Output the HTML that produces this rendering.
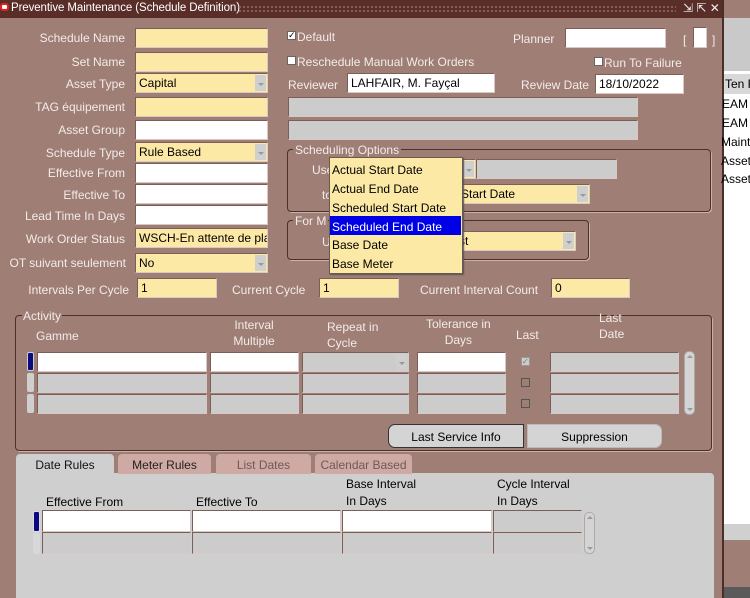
<!DOCTYPE html>
<html><head><meta charset="utf-8"><style>
*{box-sizing:border-box}
body{margin:0;width:750px;height:598px;overflow:hidden;background:#9e7e75;font-family:"Liberation Sans",sans-serif;font-size:12px;position:relative}
div,span{position:absolute}
.l{color:#f3ecea;white-space:nowrap}
.r{text-align:right}
.f{height:20px;border-top:1px solid #7a5e57;border-left:1px solid #7a5e57;border-right:1px solid #d9c9c5;border-bottom:1px solid #d9c9c5;padding:2px 3px;color:#000;white-space:nowrap;overflow:hidden}
.y{background:#fde9a6}.w{background:#fff}.g{background:#cccccc}
.dd{position:absolute;right:1px;top:1px;bottom:1px;width:11px;background:#cfcfcf}
.dd:after{content:"";position:absolute;left:3px;top:8px;border:3px solid transparent;border-top:3px solid #999}
.frame{border:1px solid #4e302b;border-radius:4px;box-shadow:1px 1px 0 #c9b1ab}
.t{color:#000;white-space:nowrap}
.cb{width:9px;height:9px;background:#fff;border:1px solid #666}
.ri{width:7px;height:19px;background:#cfcfcf;border-radius:2px}
.tab{top:454px;height:20px;background:#cfa9a4;border-radius:4px 4px 0 0;text-align:center;padding-top:4px;color:#222}
.sb{background:#d4d4d4;border:1px solid #aaa;border-radius:5px}
.sb:before{content:"";position:absolute;left:2px;top:3px;border:3px solid transparent;border-bottom:3px solid #999;border-top:0}
.sb:after{content:"";position:absolute;left:2px;bottom:3px;border:3px solid transparent;border-top:3px solid #999;border-bottom:0}
</style></head><body>
<!-- title bar -->
<div style="left:0;top:0;width:723px;height:18px;background:#5a2e28"></div>
<div style="left:0;top:3px;width:9px;height:8px;border:2px solid #e02020;border-radius:3px;background:#fff"></div>
<div class="l" style="left:11px;top:2px;color:#fff;font-size:11.5px;letter-spacing:-0.1px">Preventive Maintenance (Schedule Definition)</div>
<div style="left:238px;top:5px;width:438px;height:8px;background-image:radial-gradient(#8a6058 1px,transparent 1.3px);background-size:4px 4px"></div>
<div class="l" style="left:683px;top:1px;color:#eee;font-size:12px">⇲ ⇱ ✕</div>
<div style="left:722px;top:0;width:2px;height:598px;background:#4a2e29"></div>
<!-- right strip -->
<div style="left:724px;top:0;width:26px;height:18px;background:#9e7e75"></div>
<div style="left:724px;top:18px;width:26px;height:53px;background:#c9c9c9"></div>
<div style="left:724px;top:71px;width:26px;height:453px;background:#fff"></div>
<div style="left:724px;top:74px;width:26px;height:20px;background:#d8d8d8"></div>
<div class="t" style="left:725px;top:77px">Ten F</div>
<div class="t" style="left:722px;top:97px">EAM F</div>
<div class="t" style="left:722px;top:116px">EAM F</div>
<div class="t" style="left:721px;top:135px">Mainte</div>
<div class="t" style="left:721px;top:154px">Asset</div>
<div class="t" style="left:721px;top:172px">Asset</div>
<div style="left:724px;top:524px;width:26px;height:16px;background:#d0d0d0"></div>
<div style="left:724px;top:540px;width:26px;height:47px;background:#9e7e75"></div>
<div style="left:724px;top:587px;width:26px;height:11px;background:#5a5a5a"></div>

<!-- left labels -->
<div class="l r" style="left:0;width:125px;top:31px">Schedule Name</div>
<div class="l r" style="left:0;width:125px;top:55px">Set Name</div>
<div class="l r" style="left:0;width:125px;top:77px">Asset Type</div>
<div class="l r" style="left:0;width:125px;top:100px">TAG équipement</div>
<div class="l r" style="left:0;width:125px;top:123px">Asset Group</div>
<div class="l r" style="left:0;width:125px;top:146px">Schedule Type</div>
<div class="l r" style="left:0;width:125px;top:166px">Effective From</div>
<div class="l r" style="left:0;width:125px;top:188px">Effective To</div>
<div class="l r" style="left:0;width:125px;top:209px">Lead Time In Days</div>
<div class="l r" style="left:0;width:125px;top:232px">Work Order Status</div>
<div class="l r" style="left:0;width:126px;top:256px">OT suivant seulement</div>
<div class="l r" style="left:0;width:129px;top:283px">Intervals Per Cycle</div>

<div class="f y" style="left:135px;top:28px;width:133px"></div>
<div class="f y" style="left:135px;top:52px;width:133px"></div>
<div class="f y" style="left:135px;top:73px;width:133px">Capital<span class="dd"></span></div>
<div class="f y" style="left:135px;top:97px;width:133px"></div>
<div class="f w" style="left:135px;top:120px;width:133px"></div>
<div class="f y" style="left:135px;top:142px;width:133px">Rule Based<span class="dd"></span></div>
<div class="f w" style="left:135px;top:163px;width:133px"></div>
<div class="f w" style="left:135px;top:184px;width:133px"></div>
<div class="f w" style="left:135px;top:205px;width:133px"></div>
<div class="f y" style="left:135px;top:228px;width:133px">WSCH-En attente de pla</div>
<div class="f y" style="left:135px;top:253px;width:133px">No<span class="dd"></span></div>
<div class="f y" style="left:137px;top:278px;width:80px">1</div>
<div class="l" style="left:232px;top:283px">Current Cycle</div>
<div class="f y" style="left:319px;top:278px;width:80px">1</div>
<div class="l" style="left:420px;top:283px">Current Interval Count</div>
<div class="f y" style="left:551px;top:278px;width:79px">0</div>

<!-- right top -->
<div class="cb" style="left:287px;top:31px;font-size:9px;line-height:7px;color:#000">✓</div>
<div class="l" style="left:297px;top:30px">Default</div>
<div class="l" style="left:513px;top:32px">Planner</div>
<div class="f w" style="left:565px;top:28px;width:101px"></div>
<div class="l" style="left:683px;top:33px">[</div>
<div class="f w" style="left:693px;top:27px;width:14px;height:21px"></div>
<div class="l" style="left:712px;top:33px">]</div>
<div class="cb" style="left:287px;top:56px"></div>
<div class="l" style="left:297px;top:55px">Reschedule Manual Work Orders</div>
<div class="cb" style="left:594px;top:57px"></div>
<div class="l" style="left:604px;top:56px">Run To Failure</div>
<div class="l" style="left:288px;top:78px">Reviewer</div>
<div class="f w" style="left:347px;top:73px;width:148px">LAHFAIR, M. Fayçal</div>
<div class="l" style="left:521px;top:78px">Review Date</div>
<div class="f w" style="left:595px;top:74px;width:89px">18/10/2022</div>
<div class="f g" style="left:288px;top:97px;width:350px"></div>
<div class="f g" style="left:288px;top:120px;width:350px"></div>

<div class="frame" style="left:287px;top:149px;width:424px;height:63px"></div>
<div class="l" style="left:293px;top:143px;background:#9e7e75;padding:0 2px">Scheduling Options</div>
<div class="l" style="left:312px;top:163px">Use</div>
<div class="f y" style="left:440px;top:159px;width:36px"><span class="dd"></span></div>
<div class="f g" style="left:476px;top:159px;width:141px"></div>
<div class="l" style="left:322px;top:188px">to</div>
<div class="f y" style="left:440px;top:184px;width:150px;padding-left:20px">Start Date<span class="dd"></span></div>

<div class="frame" style="left:287px;top:220px;width:302px;height:40px"></div>
<div class="l" style="left:293px;top:214px;background:#9e7e75;padding:0 2px">For M</div>
<div class="l" style="left:322px;top:235px">U</div>
<div class="f y" style="left:440px;top:231px;width:136px;padding-left:18px">st<span class="dd"></span></div>

<!-- popup -->
<div style="left:329px;top:157px;width:134px;height:117px;background:#fde9a6;border:1px solid #6a5a50;box-shadow:1px 1px 1px #555"></div>
<div class="t" style="left:332px;top:163px">Actual Start Date</div>
<div class="t" style="left:332px;top:182px">Actual End Date</div>
<div class="t" style="left:332px;top:201px">Scheduled Start Date</div>
<div style="left:330px;top:216px;width:131px;height:19px;background:#0000e6"></div>
<div class="t" style="left:332px;top:220px;color:#fff">Scheduled End Date</div>
<div class="t" style="left:332px;top:238px">Base Date</div>
<div class="t" style="left:332px;top:257px">Base Meter</div>

<!-- Activity -->
<div class="frame" style="left:15px;top:315px;width:697px;height:136px"></div>
<div class="l" style="left:22px;top:309px;background:#9e7e75;padding:0 1px">Activity</div>
<div class="l" style="left:36px;top:329px">Gamme</div>
<div class="l" style="left:210px;top:317px;width:88px;text-align:center;line-height:16px">Interval<br>Multiple</div>
<div class="l" style="left:327px;top:319px;line-height:16px">Repeat in<br>Cycle</div>
<div class="l" style="left:426px;top:316px;line-height:16px;text-align:center">Tolerance in<br>Days</div>
<div class="l" style="left:516px;top:328px">Last</div>
<div class="l" style="left:599px;top:310px;line-height:16px">Last<br>Date</div>

<div class="ri" style="left:27px;top:352px;background:#0a0a80;border:1px solid #ccc"></div>
<div class="ri" style="left:27px;top:373px"></div>
<div class="ri" style="left:27px;top:394px"></div>
<div class="f w" style="left:37px;top:352px;width:170px"></div>
<div class="f g" style="left:37px;top:373px;width:170px"></div>
<div class="f g" style="left:37px;top:394px;width:170px"></div>
<div class="f w" style="left:210px;top:352px;width:89px"></div>
<div class="f g" style="left:210px;top:373px;width:89px"></div>
<div class="f g" style="left:210px;top:394px;width:89px"></div>
<div class="f g" style="left:302px;top:352px;width:107px"><span class="dd"></span></div>
<div class="f g" style="left:302px;top:373px;width:107px"></div>
<div class="f g" style="left:302px;top:394px;width:107px"></div>
<div class="f w" style="left:417px;top:352px;width:89px"></div>
<div class="f g" style="left:417px;top:373px;width:89px"></div>
<div class="f g" style="left:417px;top:394px;width:89px"></div>
<div class="cb" style="left:521px;top:357px;background:#ccc;border-color:#999;font-size:8px;line-height:7px;color:#777">✓</div>
<div class="cb" style="left:521px;top:378px;background:#9e7e75;border-color:#555"></div>
<div class="cb" style="left:521px;top:399px;background:#9e7e75;border-color:#555"></div>
<div class="f g" style="left:550px;top:352px;width:129px"></div>
<div class="f g" style="left:550px;top:373px;width:129px"></div>
<div class="f g" style="left:550px;top:394px;width:129px"></div>
<div class="sb" style="left:684px;top:351px;width:11px;height:64px"></div>

<div style="left:388px;top:424px;width:136px;height:24px;background:#d4d4d4;border:1px solid #333;border-radius:7px 0 0 7px;text-align:center;padding-top:5px">Last Service Info</div>
<div style="left:527px;top:424px;width:135px;height:24px;background:#d4d4d4;border:1px solid #bbb;border-radius:0 7px 7px 0;text-align:center;padding-top:5px">Suppression</div>

<!-- tabs -->
<div style="left:16px;top:473px;width:698px;height:125px;background:#cfcfcf;border-radius:0 4px 0 0"></div>
<div class="tab" style="left:16px;width:98px;background:#cfcfcf;height:22px;color:#111">Date Rules</div>
<div class="tab" style="left:118px;width:93px">Meter Rules</div>
<div class="tab" style="left:216px;width:95px;color:#6e5a57">List Dates</div>
<div class="tab" style="left:315px;width:97px;color:#6e5a57">Calendar Based</div>

<div class="t" style="left:46px;top:495px">Effective From</div>
<div class="t" style="left:196px;top:495px">Effective To</div>
<div class="t" style="left:346px;top:476px;line-height:17px">Base Interval<br>In Days</div>
<div class="t" style="left:497px;top:476px;line-height:17px">Cycle Interval<br>In Days</div>
<div class="ri" style="left:33px;top:511px;height:21px;background:#0a0a80;border:1px solid #ddd"></div>
<div class="ri" style="left:33px;top:533px;height:21px;background:#d8d8d8"></div>
<div class="f w" style="left:42px;top:510px;width:149px;height:22px"></div>
<div class="f g" style="left:42px;top:532px;width:149px;height:22px"></div>
<div class="f w" style="left:192px;top:510px;width:149px;height:22px"></div>
<div class="f g" style="left:192px;top:532px;width:149px;height:22px"></div>
<div class="f w" style="left:342px;top:510px;width:150px;height:22px"></div>
<div class="f g" style="left:342px;top:532px;width:150px;height:22px"></div>
<div class="f g" style="left:493px;top:510px;width:89px;height:22px"></div>
<div class="f g" style="left:493px;top:532px;width:89px;height:22px"></div>
<div class="sb" style="left:584px;top:512px;width:11px;height:42px"></div>
</body></html>
